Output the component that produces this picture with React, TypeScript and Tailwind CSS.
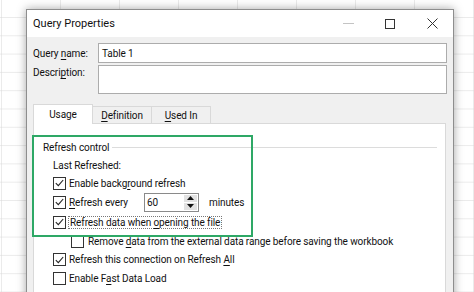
import { ReactNode } from "react";

const U = ({ children }: { children: ReactNode }) => <span className="underline underline-offset-2">{children}</span>;

const Check = ({ checked }: { checked?: boolean }) => (
  <div className="w-[13px] h-[13px] border border-[#333] bg-white flex items-center justify-center shrink-0">
    {checked && (
      <svg width="9" height="8" viewBox="0 0 9 8">
        <path d="M0.8 4.2 L3.3 6.6 L8.2 1" fill="none" stroke="#222" strokeWidth="1.1" />
      </svg>
    )}
  </div>
);

const Row = ({ h, checked, children, indent }: { h: string; checked?: boolean; children: ReactNode; indent?: boolean }) => (
  <div className={`flex items-center whitespace-nowrap ${h} ${indent ? "pl-[18px] gap-[4px]" : "gap-[3px]"}`}>
    <Check checked={checked} />
    {children}
  </div>
);

const Grid = () => (
  <svg className="absolute inset-0" width="474" height="292">
    <defs>
      <pattern id="cells" width="59" height="18.3" patternUnits="userSpaceOnUse" x="1" y="17">
        <path d="M0 0 V18.3 M0 0 H59" fill="none" stroke="#d8d8d8" strokeWidth="1" />
      </pattern>
    </defs>
    <rect width="474" height="292" fill="url(#cells)" />
  </svg>
);

export default function App() {
  return (
    <div className="relative w-[474px] h-[292px] overflow-hidden bg-white text-[10px] tracking-[-0.1px] text-[#111] font-['Roboto',sans-serif] leading-[13px] whitespace-nowrap">
      <Grid />

      <div className="absolute left-[26px] top-[9px] w-[428px] h-[300px] border border-[#8e8e8e] bg-[#f0f0f0] shadow-[0_0_9px_rgba(0,0,0,0.35)] flex flex-col">
        {/* title bar */}
        <div className="h-[27px] bg-white flex items-center pl-[6px] shrink-0">
          <span className="text-[11px] tracking-normal">Query Properties</span>
          <div className="ml-auto flex h-full">
            <div className="w-[42px] flex items-center justify-center">
              <div className="w-[11px] h-px bg-[#c4c4c4]" />
            </div>
            <div className="w-[42px] flex items-center justify-center">
              <div className="w-[10px] h-[10px] border border-[#333]" />
            </div>
            <div className="w-[42px] flex items-center justify-center">
              <svg width="11" height="11" viewBox="0 0 11 11">
                <path d="M0.5 0.5 L10.5 10.5 M10.5 0.5 L0.5 10.5" stroke="#333" strokeWidth="1" />
              </svg>
            </div>
          </div>
        </div>

        {/* body */}
        <div className="flex flex-col pt-[6px] pl-[6px] pr-[6px]">
          <div className="flex items-center h-[20px]">
            <span className="w-[65px] shrink-0">Query <U>n</U>ame:</span>
            <div className="flex-1 h-full border border-[#acacac] bg-white flex items-center pl-[3px]">Table 1</div>
          </div>
          <div className="flex items-start h-[29px] mt-[2px]">
            <span className="w-[65px] shrink-0 pt-[1px]">Descri<U>p</U>tion:</span>
            <div className="flex-1 h-full border border-[#acacac] bg-white" />
          </div>

          {/* tabs */}
          <div className="flex items-end mt-[10px] h-[20px] relative z-10">
            <div className="w-[60px] h-[20px] bg-white border border-b-0 border-[#d9d9d9] flex items-center justify-center pb-[1px]">Usage</div>
            <div className="w-[59px] h-[18px] border border-l-0 border-[#d9d9d9] bg-[#f0f0f0] flex items-center justify-center">
              <span><U>D</U>efinition</span>
            </div>
            <div className="w-[59px] h-[18px] border border-l-0 border-[#d9d9d9] bg-[#f0f0f0] flex items-center justify-center">
              <span><U>U</U>sed In</span>
            </div>
          </div>

          {/* panel */}
          <div className="-mt-px mr-[1px] h-[200px] bg-white border border-[#d9d9d9] pt-[17px] pl-[19px]">
            <div className="flex items-center pr-[8px] -ml-[10px]">
              <span className="pr-[3px]">Refresh control</span>
              <div className="flex-1 h-px bg-[#dcdcdc]" />
            </div>
            <div className="flex flex-col mt-[3px]">
              <div className="h-[17px] flex items-center">Last Refreshed:</div>
              <Row h="h-[18px]" checked>
                <span>Enable backg<U>r</U>ound refresh</span>
              </Row>
              <Row h="h-[20px]" checked>
                <span className="w-[72px]"><U>R</U>efresh every</span>
                <div className="w-[55px] h-[19px] border border-[#8a8a8a] bg-white flex items-center">
                  <span className="pl-[2px] flex-1">60</span>
                  <div className="w-[15px] h-full flex flex-col gap-px p-px">
                    <div className="flex-1 bg-[#e2e2e2] flex items-center justify-center">
                      <svg width="7" height="4" viewBox="0 0 7 4"><path d="M0 4 L3.5 0 L7 4Z" fill="#111" /></svg>
                    </div>
                    <div className="flex-1 bg-[#e2e2e2] flex items-center justify-center">
                      <svg width="7" height="4" viewBox="0 0 7 4"><path d="M0 0 L3.5 4 L7 0Z" fill="#111" /></svg>
                    </div>
                  </div>
                </div>
                <span className="ml-[7px]">minutes</span>
              </Row>
              <Row h="h-[20px]" checked>
                <span className="inline-block border border-dotted border-[#777] px-px h-[13px] leading-[11px] -ml-[1px]">
                  Refresh data when <U>o</U>pening the file
                </span>
              </Row>
              <Row h="h-[18px]" indent>
                <span>Remove <U>d</U>ata from the external data range before saving the workbook</span>
              </Row>
              <Row h="h-[19px]" checked>
                <span>Refresh this connection on Refresh <U>A</U>ll</span>
              </Row>
              <Row h="h-[19px]">
                <span>Enable F<U>a</U>st Data Load</span>
              </Row>
            </div>
          </div>
        </div>
      </div>

      {/* annotation */}
      <div className="absolute left-[32px] top-[135px] w-[221px] h-[102px] border-2 border-[#2ea866]" />
    </div>
  );
}
